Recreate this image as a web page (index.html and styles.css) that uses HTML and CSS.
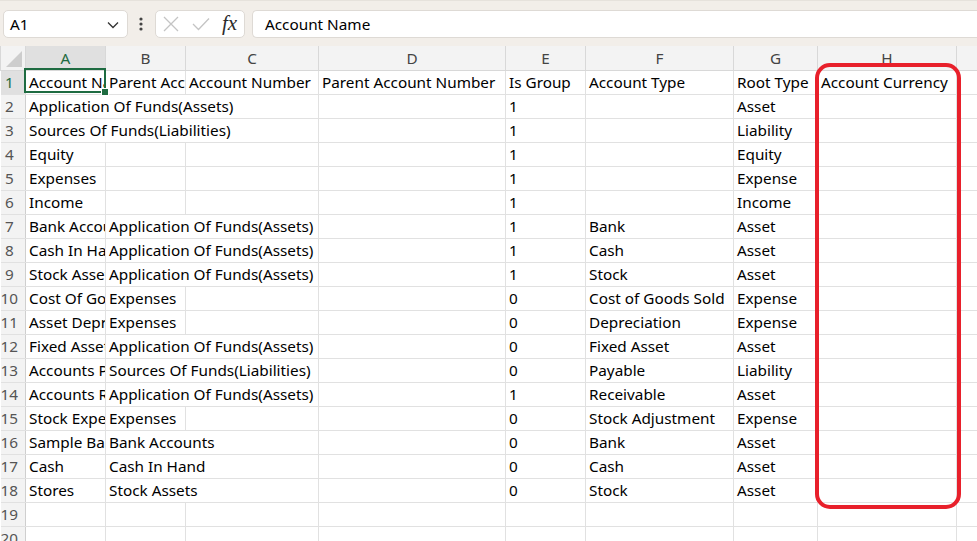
FILE: index.html
```html
<!DOCTYPE html>
<html lang="en">
<head>
<meta charset="utf-8">
<title>Accounts sheet</title>
<link rel="stylesheet" href="styles.css">
</head>
<body>
<div class="toolbar">
  <div class="namebox">
    <span class="nb-text">A1</span>
    <svg class="chev" width="12" height="8" viewBox="0 0 12 8"><path d="M1 1.5 L6 6.5 L11 1.5" fill="none" stroke="#333" stroke-width="1.3"/></svg>
  </div>
  <svg class="dots" width="6" height="16" viewBox="0 0 6 16"><circle cx="3" cy="3" r="1.6" fill="#444"/><circle cx="3" cy="8" r="1.6" fill="#444"/><circle cx="3" cy="13" r="1.6" fill="#444"/></svg>
  <div class="fbtns">
    <svg class="ico" width="16" height="16" viewBox="0 0 16 16"><path d="M1 1 L15 15 M15 1 L1 15" stroke="#c4c4c4" stroke-width="1.3" fill="none"/></svg>
    <svg class="ico" width="18" height="14" viewBox="0 0 18 14"><path d="M1 7 L6.5 12.5 L17 1.5" stroke="#c4c4c4" stroke-width="1.3" fill="none"/></svg>
    <span class="fx">fx</span>
  </div>
  <div class="fbar">Account Name</div>
</div>
<div class="sheet">
  <table class="grid">
    <colgroup>
      <col class="c-rh"><col class="c-a"><col class="c-b"><col class="c-c"><col class="c-d"><col class="c-e"><col class="c-f"><col class="c-g"><col class="c-h"><col class="c-i">
    </colgroup>
    <tr class="hdr">
      <th class="corner"><span class="tri"></span></th>
      <th class="sel">A</th><th>B</th><th>C</th><th>D</th><th>E</th><th>F</th><th>G</th><th>H</th><th></th>
    </tr>
    <tr><th class="rh sel">1</th><td>Account Name</td><td>Parent Account</td><td>Account Number</td><td>Parent Account Number</td><td>Is Group</td><td>Account Type</td><td>Root Type</td><td>Account Currency</td><td></td></tr>
    <tr><th class="rh">2</th><td colspan="3">Application Of Funds(Assets)</td><td></td><td>1</td><td></td><td>Asset</td><td></td><td></td></tr>
    <tr><th class="rh">3</th><td colspan="3">Sources Of Funds(Liabilities)</td><td></td><td>1</td><td></td><td>Liability</td><td></td><td></td></tr>
    <tr><th class="rh">4</th><td>Equity</td><td></td><td></td><td></td><td>1</td><td></td><td>Equity</td><td></td><td></td></tr>
    <tr><th class="rh">5</th><td>Expenses</td><td></td><td></td><td></td><td>1</td><td></td><td>Expense</td><td></td><td></td></tr>
    <tr><th class="rh">6</th><td>Income</td><td></td><td></td><td></td><td>1</td><td></td><td>Income</td><td></td><td></td></tr>
    <tr><th class="rh">7</th><td>Bank Accounts</td><td colspan="2">Application Of Funds(Assets)</td><td></td><td>1</td><td>Bank</td><td>Asset</td><td></td><td></td></tr>
    <tr><th class="rh">8</th><td>Cash In Hand</td><td colspan="2">Application Of Funds(Assets)</td><td></td><td>1</td><td>Cash</td><td>Asset</td><td></td><td></td></tr>
    <tr><th class="rh">9</th><td>Stock Assets</td><td colspan="2">Application Of Funds(Assets)</td><td></td><td>1</td><td>Stock</td><td>Asset</td><td></td><td></td></tr>
    <tr><th class="rh">10</th><td>Cost Of Goods Sold</td><td>Expenses</td><td></td><td></td><td>0</td><td>Cost of Goods Sold</td><td>Expense</td><td></td><td></td></tr>
    <tr><th class="rh">11</th><td>Asset Depreciation</td><td>Expenses</td><td></td><td></td><td>0</td><td>Depreciation</td><td>Expense</td><td></td><td></td></tr>
    <tr><th class="rh">12</th><td>Fixed Assets</td><td colspan="2">Application Of Funds(Assets)</td><td></td><td>0</td><td>Fixed Asset</td><td>Asset</td><td></td><td></td></tr>
    <tr><th class="rh">13</th><td>Accounts Payable</td><td colspan="2">Sources Of Funds(Liabilities)</td><td></td><td>0</td><td>Payable</td><td>Liability</td><td></td><td></td></tr>
    <tr><th class="rh">14</th><td>Accounts Receivable</td><td colspan="2">Application Of Funds(Assets)</td><td></td><td>1</td><td>Receivable</td><td>Asset</td><td></td><td></td></tr>
    <tr><th class="rh">15</th><td>Stock Expenses</td><td>Expenses</td><td></td><td></td><td>0</td><td>Stock Adjustment</td><td>Expense</td><td></td><td></td></tr>
    <tr><th class="rh">16</th><td>Sample Bank</td><td colspan="2">Bank Accounts</td><td></td><td>0</td><td>Bank</td><td>Asset</td><td></td><td></td></tr>
    <tr><th class="rh">17</th><td>Cash</td><td colspan="2">Cash In Hand</td><td></td><td>0</td><td>Cash</td><td>Asset</td><td></td><td></td></tr>
    <tr><th class="rh">18</th><td>Stores</td><td colspan="2">Stock Assets</td><td></td><td>0</td><td>Stock</td><td>Asset</td><td></td><td></td></tr>
    <tr><th class="rh">19</th><td></td><td></td><td></td><td></td><td></td><td></td><td></td><td></td><td></td></tr>
    <tr><th class="rh">20</th><td></td><td></td><td></td><td></td><td></td><td></td><td></td><td></td><td></td></tr>
  </table>
  <div class="active"><span class="handle"></span></div>
  <div class="mark"></div>
</div>
</body>
</html>
```

FILE: styles.css
```css
html, body {
  margin: 0;
  padding: 0;
}
body {
  width: 977px;
  height: 541px;
  overflow: hidden;
  background: #f2eee9;
  font-family: "Noto Sans", "Open Sans", sans-serif;
  color: #000;
}

/* toolbar */
.toolbar {
  display: flex;
  align-items: flex-start;
  height: 46px;
  box-sizing: border-box;
  padding: 9px 0 0 3px;
  background: #f2eee9;
  border-top: 1px solid #e6e2dc;
}
.namebox {
  width: 125px;
  height: 28px;
  box-sizing: border-box;
  background: #fff;
  border: 1px solid #dedad5;
  border-radius: 5px;
  display: flex;
  align-items: center;
  justify-content: space-between;
  padding: 0 8px 0 6px;
  font-size: 15.3px;
}
.chev { margin-top: 2px; }
.dots {
  margin: 6px 0 0 0;
  padding: 0 11px 0 10px;
}
.fbtns {
  width: 90px;
  height: 28px;
  box-sizing: border-box;
  background: #fff;
  border: 1px solid #dedad5;
  border-radius: 5px;
  display: flex;
  align-items: center;
  padding: 0 0 0 7px;
  gap: 13px;
}
.ico { display: block; }
.fx {
  font-family: "Liberation Serif", "DejaVu Serif", serif;
  font-style: italic;
  font-size: 21px;
  color: #2b2b2b;
  margin-left: -1px;
  line-height: 1;
  margin-top: -2px;
}
.fbar {
  flex: 1;
  margin-left: 7px;
  height: 28px;
  box-sizing: border-box;
  background: #fff;
  border: 1px solid #dedad5;
  border-right: none;
  border-radius: 5px 0 0 5px;
  padding-left: 12px;
  font-size: 15.3px;
  line-height: 26px;
}

/* sheet */
.sheet {
  position: relative;
  background: #fff;
}
.grid {
  table-layout: fixed;
  border-collapse: collapse;
  width: 1000px;
  font-size: 15.3px;
}
.c-rh { width: 25px; }
.c-a { width: 80px; }
.c-b { width: 80px; }
.c-c { width: 133px; }
.c-d { width: 187px; }
.c-e { width: 80px; }
.c-f { width: 148px; }
.c-g { width: 84px; }
.c-h { width: 139px; }
.c-i { width: 44px; }

.grid tr { height: 24px; }
.grid td, .grid th {
  padding: 0;
  height: 23px;
  white-space: nowrap;
  overflow: hidden;
  text-overflow: clip;
  box-sizing: border-box;
}
.grid td {
  border: 1px solid #e1e1e1;
  padding-left: 3px;
  line-height: 22px;
}
.hdr th {
  background: #f3f3f3;
  border: 1px solid #d8d8d8;
  border-top: none;
  font-weight: normal;
  color: #444;
  text-align: center;
  line-height: 22px;
}
.hdr th.sel {
  background: #e0e0e0;
  color: #1e6b41;
}
th.rh {
  background: #f3f3f3;
  border: 1px solid #e1e1e1;
  border-left: none;
  border-right: 1px solid #cfcfcf;
  font-weight: normal;
  color: #555;
  text-align: center;
  padding-right: 7px;
  line-height: 22px;
}
th.rh.sel {
  background: #e0e0e0;
  color: #1e6b41;
}
.corner {
  position: relative;
}
.tri {
  position: absolute;
  right: 3px;
  bottom: 3px;
  width: 0;
  height: 0;
  border-left: 16px solid transparent;
  border-bottom: 16px solid #cdcdcd;
}

/* overlays */
.active {
  position: absolute;
  left: 24px;
  top: 22px;
  width: 82px;
  height: 25px;
  box-sizing: border-box;
  border: 2px solid #1e6b41;
}
.handle {
  position: absolute;
  right: -5px;
  bottom: -5px;
  width: 6px;
  height: 6px;
  background: #1e6b41;
  border: 1px solid #fff;
}
.mark {
  position: absolute;
  left: 815px;
  top: 17px;
  width: 146px;
  height: 446px;
  box-sizing: border-box;
  border: 4px solid #e8202b;
  border-radius: 15px;
}
```
